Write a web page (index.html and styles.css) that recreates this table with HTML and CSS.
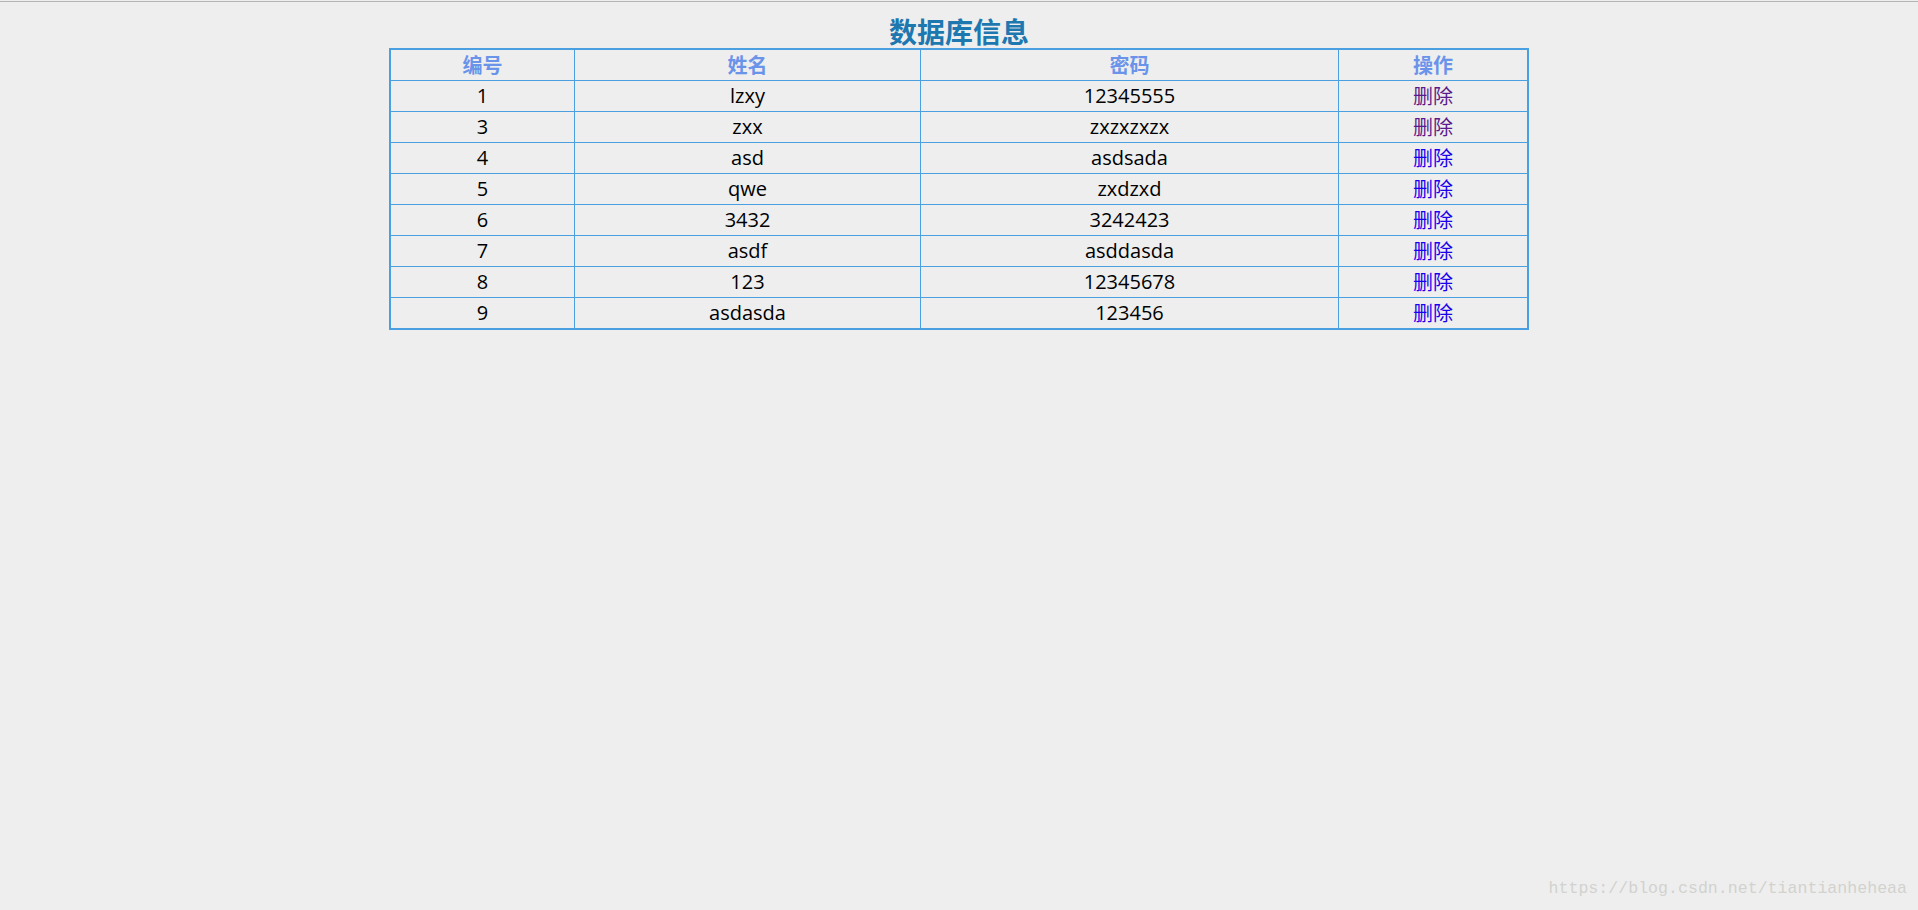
FILE: index.html
```html
<!DOCTYPE html>
<html lang="zh-CN">
<head>
<meta charset="utf-8">
<title>数据库信息</title>
<link rel="stylesheet" href="styles.css">
</head>
<body>
<div class="topline"></div>
<h1 class="title">数据库信息</h1>
<table class="db">
  <thead>
    <tr><th class="c1">编号</th><th class="c2">姓名</th><th class="c3">密码</th><th class="c4">操作</th></tr>
  </thead>
  <tbody>
    <tr><td>1</td><td>lzxy</td><td>12345555</td><td><a class="del visited" href="#">删除</a></td></tr>
    <tr><td>3</td><td>zxx</td><td>zxzxzxzx</td><td><a class="del visited" href="#">删除</a></td></tr>
    <tr><td>4</td><td>asd</td><td>asdsada</td><td><a class="del" href="#">删除</a></td></tr>
    <tr><td>5</td><td>qwe</td><td>zxdzxd</td><td><a class="del" href="#">删除</a></td></tr>
    <tr><td>6</td><td>3432</td><td>3242423</td><td><a class="del" href="#">删除</a></td></tr>
    <tr><td>7</td><td>asdf</td><td>asddasda</td><td><a class="del" href="#">删除</a></td></tr>
    <tr><td>8</td><td>123</td><td>12345678</td><td><a class="del" href="#">删除</a></td></tr>
    <tr><td>9</td><td>asdasda</td><td>123456</td><td><a class="del" href="#">删除</a></td></tr>
  </tbody>
</table>
<div class="watermark">https://blog.csdn.net/tiantianheheaa</div>
</body>
</html>
```
FILE: styles.css
```css
html, body {
  margin: 0;
  padding: 0;
  background: #eeeeee;
  height: 100%;
}
body {
  font-family: "Open Sans", "Noto Sans CJK SC", sans-serif;
  color: #000;
  position: relative;
  overflow: hidden;
}
.topline {
  margin-top: 1px;
  height: 1px;
  background: #b4b4b4;
}
.title {
  margin: 0;
  padding: 14px 0 2px;
  height: 30px;
  line-height: 30px;
  font-family: "Noto Sans CJK SC", sans-serif;
  font-size: 28px;
  font-weight: 700;
  color: #1d78b0;
  text-align: center;
}
.db {
  width: 1140px;
  margin: 0 auto;
  table-layout: fixed;
  border-collapse: separate;
  border-spacing: 0;
  border: 2px solid #4a9fe0;
}
.db th, .db td {
  height: 30px;
  padding: 0;
  line-height: 22px;
  vertical-align: middle;
  text-align: center;
  border-right: 1px solid #4a9fe0;
  border-bottom: 1px solid #4a9fe0;
  font-size: 20px;
  white-space: nowrap;
}
.db tr > :last-child { border-right: none; }
.db tbody tr:last-child td { border-bottom: none; }
.db .c1 { width: 183px; }
.db .c2 { width: 345px; }
.db .c3 { width: 417px; }
.db .c4 { width: 188px; }
.db th {
  font-family: "Noto Sans CJK SC", sans-serif;
  font-weight: 700;
  color: #6a93ea;
}
.del {
  font-family: "Noto Sans CJK SC", sans-serif;
  font-weight: 400;
  line-height: 22px;
  color: #1a00ee;
  text-decoration: none;
}
.del.visited { color: #5a1a8b; }
.watermark {
  position: absolute;
  right: 11px;
  bottom: 12px;
  font-family: "Liberation Mono", monospace;
  font-size: 16.6px;
  line-height: 18px;
  color: #d2d2ce;
}
```
